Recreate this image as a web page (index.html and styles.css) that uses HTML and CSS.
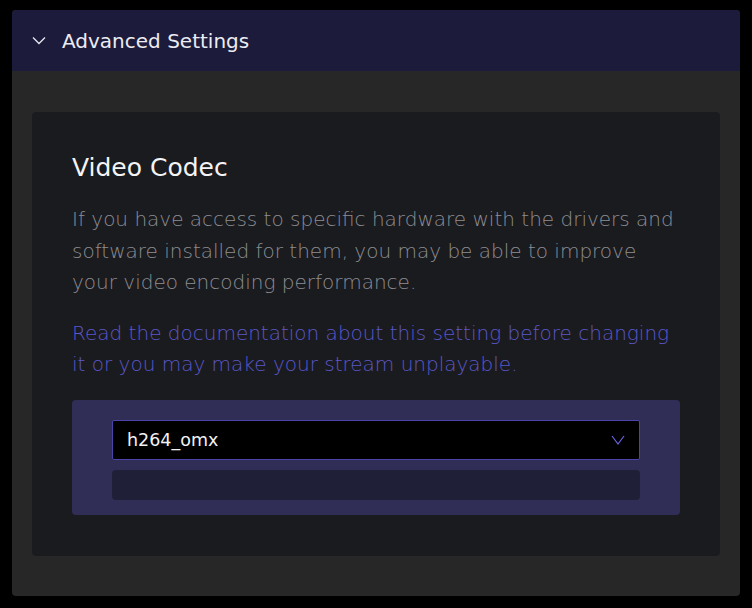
FILE: index.html
```html
<!DOCTYPE html>
<html>
<head>
<meta charset="utf-8">
<link rel="stylesheet" href="styles.css">
</head>
<body>
<section class="panel">
  <header class="panel-header">
    <svg class="chev" width="14" height="9" viewBox="0 0 14 9"><path d="M1 1.5 L7 7.5 L13 1.5" fill="none" stroke="#e8e8f0" stroke-width="1.3"/></svg>
    <span class="panel-title">Advanced Settings</span>
  </header>
  <div class="panel-body">
    <div class="card">
      <h2 class="card-title">Video Codec</h2>
      <p class="desc">If you have access to specific hardware with the drivers and software installed for them, you may be able to improve your video encoding performance.</p>
      <p class="link">Read the documentation about this setting before changing it or you may make your stream unplayable.</p>
      <div class="field">
        <div class="select">
          <span class="select-value">h264_omx</span>
          <svg class="select-chev" width="14" height="10" viewBox="0 0 14 10"><path d="M1 1 L7 9 L13 1" fill="none" stroke="#6a62e0" stroke-width="1.2"/></svg>
        </div>
        <div class="help"></div>
      </div>
    </div>
  </div>
</section>
</body>
</html>
```
FILE: styles.css
```css
html, body {
  margin: 0;
  padding: 0;
  background: #000;
}
body {
  padding: 10px 12px 13px 12px;
  font-family: "DejaVu Sans", sans-serif;
}
.panel {
  border-radius: 4px;
  overflow: hidden;
  background: #272727;
}
.panel-header {
  height: 61px;
  background: #1c1b3b;
  display: flex;
  align-items: center;
  padding-left: 20px;
  box-sizing: border-box;
}
.chev {
  margin-right: 16px;
}
.panel-title {
  color: #ececf2;
  font-size: 20px;
}
.panel-body {
  padding: 41px 20px 40px 20px;
}
.card {
  background: #1a1b1f;
  border-radius: 4px;
  padding: 40px 40px 41px 40px;
}
.card-title {
  margin: 0;
  font-weight: normal;
  color: #f4f4f6;
  font-size: 25px;
  line-height: 32px;
}
.desc {
  margin: 20px 0 0 0;
  color: #8d8d92;
  font-size: 20px;
  font-weight: 200;
  line-height: 31.5px;
}
.link {
  margin: 19px 0 0 0;
  color: #5c57c9;
  font-size: 20px;
  font-weight: 200;
  line-height: 31px;
}
.field {
  margin-top: 20px;
  background: #302e56;
  border-radius: 4px;
  padding: 20px 40px 15px 40px;
}
.select {
  height: 40px;
  box-sizing: border-box;
  background: #000;
  border: 1px solid #4a44a8;
  border-radius: 2px;
  display: flex;
  align-items: center;
  justify-content: space-between;
  padding: 0 14px 0 14px;
}
.select-value {
  color: #f2f2f4;
  font-size: 17.5px;
}
.help {
  margin-top: 10px;
  height: 30px;
  background: #201f38;
  border-radius: 4px;
}
```
